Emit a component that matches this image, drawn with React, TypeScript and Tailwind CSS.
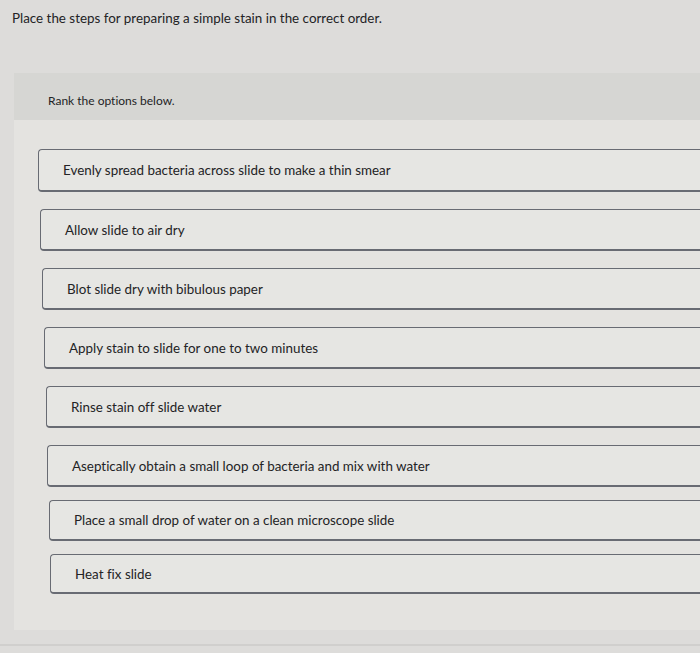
import React from 'react';

interface Step {
    label: string;
    box: string;
}

// photo is slightly skewed, so each card drifts right a little and the lower ones sit tighter
const steps: Step[] = [
    { label: 'Evenly spread bacteria across slide to make a thin smear', box: 'ml-[24px] mt-[29px] h-[43px]' },
    { label: 'Allow slide to air dry', box: 'ml-[26px] mt-[17px] h-[42px]' },
    { label: 'Blot slide dry with bibulous paper', box: 'ml-[28px] mt-[17px] h-[42px]' },
    { label: 'Apply stain to slide for one to two minutes', box: 'ml-[30px] mt-[17px] h-[42px]' },
    { label: 'Rinse stain off slide water', box: 'ml-[32px] mt-[17px] h-[42px]' },
    { label: 'Aseptically obtain a small loop of bacteria and mix with water', box: 'ml-[33px] mt-[17px] h-[42px]' },
    { label: 'Place a small drop of water on a clean microscope slide', box: 'ml-[35px] mt-[13px] h-[41px]' },
    { label: 'Heat fix slide', box: 'ml-[36px] mt-[13px] h-[40px]' },
];

export default function App() {
    return (
        <div
            className="w-[700px] h-[653px] overflow-hidden bg-[#dddcda] text-[#232325] [font-variant-ligatures:none]"
            style={{ fontFamily: 'Lato, "Open Sans", sans-serif' }}
        >
            <p className="pl-[12px] pt-[10px] text-[13.4px] leading-[16px]">
                Place the steps for preparing a simple stain in the correct order.
            </p>

            <div className="ml-[14px] mt-[47px] h-[557px] bg-[#e4e3e0]">
                <div className="h-[47px] bg-[#d6d6d3] flex items-center pl-[34px] pt-[8px]">
                    <span className="text-[12px] leading-[14px]">Rank the options below.</span>
                </div>

                {steps.map((step) => (
                    <div
                        key={step.label}
                        className={`${step.box} flex items-center pl-[24px] rounded-l-[4px] border-[1.5px] border-b-2 border-r-0 border-[#686b73] bg-[#e6e6e3]`}
                    >
                        <span className="text-[13.4px] leading-[16px]">{step.label}</span>
                    </div>
                ))}
            </div>

            <div className="mt-[14px] h-[2px] bg-[#d0cfcd]" />
        </div>
    );
}
